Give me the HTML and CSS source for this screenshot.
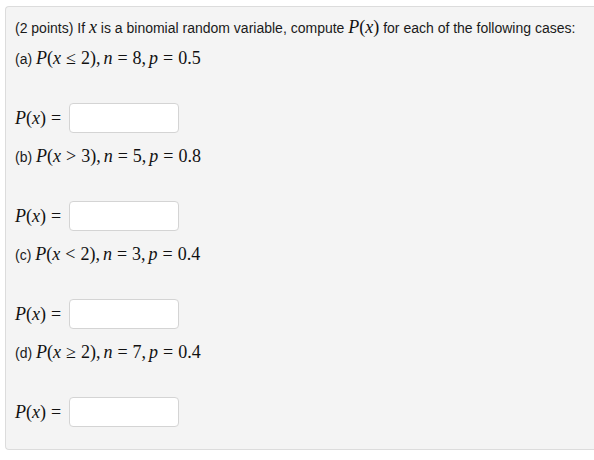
FILE: index.html
```html
<!DOCTYPE html>
<html>
<head>
<meta charset="utf-8">
<link rel="stylesheet" href="styles.css">
</head>
<body>
<div class="panel">
  <p class="intro">(2 points) If <span class="m"><i>x</i></span> is a binomial random variable, compute <span class="m"><i>P</i>(<i>x</i>)</span> for each of the following cases:</p>

  <div class="part">
    <p class="q">(a) <span class="m"><i>P</i>(<i>x</i><span class="rel">≤</span>2)<span class="pc">,</span><i>n</i><span class="rel">=</span>8<span class="pc">,</span><i>p</i><span class="rel">=</span>0.5</span></p>
    <div class="ans"><span class="m"><i>P</i>(<i>x</i>)<span class="rel">=</span></span><input class="box" type="text"></div>
  </div>

  <div class="part">
    <p class="q">(b) <span class="m"><i>P</i>(<i>x</i><span class="rel">&gt;</span>3)<span class="pc">,</span><i>n</i><span class="rel">=</span>5<span class="pc">,</span><i>p</i><span class="rel">=</span>0.8</span></p>
    <div class="ans"><span class="m"><i>P</i>(<i>x</i>)<span class="rel">=</span></span><input class="box" type="text"></div>
  </div>

  <div class="part">
    <p class="q">(c) <span class="m"><i>P</i>(<i>x</i><span class="rel">&lt;</span>2)<span class="pc">,</span><i>n</i><span class="rel">=</span>3<span class="pc">,</span><i>p</i><span class="rel">=</span>0.4</span></p>
    <div class="ans"><span class="m"><i>P</i>(<i>x</i>)<span class="rel">=</span></span><input class="box" type="text"></div>
  </div>

  <div class="part">
    <p class="q">(d) <span class="m"><i>P</i>(<i>x</i><span class="rel">≥</span>2)<span class="pc">,</span><i>n</i><span class="rel">=</span>7<span class="pc">,</span><i>p</i><span class="rel">=</span>0.4</span></p>
    <div class="ans"><span class="m"><i>P</i>(<i>x</i>)<span class="rel">=</span></span><input class="box" type="text"></div>
  </div>
</div>
</body>
</html>
```

FILE: styles.css
```css
html, body {
  margin: 0;
  padding: 0;
  background: #ffffff;
}
body {
  font-family: "Liberation Sans", Arial, sans-serif;
  font-size: 14px;
  color: #1a1a1a;
}
.panel {
  margin: 6px 0 0 5px;
  height: 444px;
  box-sizing: border-box;
  border: 1px solid #dcdcdc;
  border-right: none;
  border-radius: 4px 0 0 4px;
  background: #f4f4f4;
  padding: 11px 0 0 9px;
}
p {
  margin: 0;
}
.intro {
  line-height: 20px;
  height: 20px;
}
.m {
  font-family: "Liberation Serif", "Times New Roman", serif;
  font-size: 18px;
  line-height: 1;
  color: #111111;
}
.m i {
  font-style: italic;
}
.rel {
  margin: 0 0.278em;
}
.pc {
  margin-right: 0.167em;
}
.part {
  margin-top: 9px;
}
.part + .part {
  margin-top: 12px;
}
.q {
  line-height: 20px;
  height: 20px;
  padding-top: 2px;
}
.ans {
  margin-top: 34px;
  display: flex;
  align-items: center;
  gap: 8px;
  height: 30px;
}
.ans .rel {
  margin-right: 0;
}
.box {
  width: 110px;
  height: 30px;
  box-sizing: border-box;
  border: 1px solid #d4d4d4;
  border-radius: 4px;
  background: #ffffff;
  margin: 0;
  padding: 0 6px;
}
```
